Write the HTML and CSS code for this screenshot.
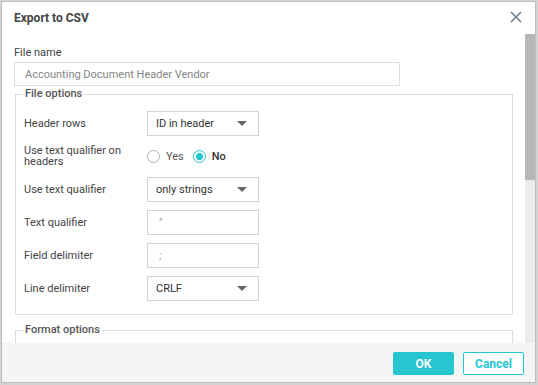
FILE: index.html
```html
<!DOCTYPE html>
<html>
<head>
<meta charset="utf-8">
<link rel="stylesheet" href="styles.css">
</head>
<body>
<div class="dialog">
  <div class="dialog-header">
    <span class="dialog-title">Export to CSV</span>
    <button class="close-btn" aria-label="Close">
      <svg width="12" height="12" viewBox="0 0 12 12"><path d="M1 1 L11 11 M11 1 L1 11" stroke="#6e8190" stroke-width="1.6" fill="none"/></svg>
    </button>
  </div>
  <div class="dialog-body">
    <div class="body-content">
      <label class="field-label">File name</label>
      <input class="text-input file-name" type="text" placeholder="Accounting Document Header Vendor">
      <fieldset class="group">
        <legend>File options</legend>
        <div class="form-grid">
          <div class="row-label">Header rows</div>
          <div class="select"><span>ID in header</span><i class="caret"></i></div>

          <div class="row-label two-line">Use text qualifier on headers</div>
          <div class="radios">
            <span class="radio"></span><span class="radio-text">Yes</span>
            <span class="radio checked"></span><span class="radio-text selected">No</span>
          </div>

          <div class="row-label">Use text qualifier</div>
          <div class="select"><span>only strings</span><i class="caret"></i></div>

          <div class="row-label">Text qualifier</div>
          <div class="text-box">"</div>

          <div class="row-label">Field delimiter</div>
          <div class="text-box">;</div>

          <div class="row-label">Line delimiter</div>
          <div class="select"><span>CRLF</span><i class="caret"></i></div>
        </div>
      </fieldset>
      <fieldset class="group format">
        <legend>Format options</legend>
        <div class="format-space"></div>
      </fieldset>
    </div>
    <div class="scrollbar"><div class="scroll-thumb"></div></div>
  </div>
  <div class="dialog-footer">
    <button class="btn btn-primary">OK</button>
    <button class="btn btn-secondary">Cancel</button>
  </div>
</div>
</body>
</html>
```
FILE: styles.css
```css
html, body {
  margin: 0;
  padding: 0;
}
body {
  background: #d4d4d4;
  font-family: Roboto, "Liberation Sans", Arial, sans-serif;
  font-size: 11px;
  color: #444;
  width: 538px;
  height: 385px;
  overflow: hidden;
}
.dialog {
  box-sizing: border-box;
  width: 535px;
  height: 382px;
  margin: 1px 0 0 1px;
  border: 1px solid #bdbdbd;
  background: #fff;
  display: flex;
  flex-direction: column;
}
.dialog-header {
  height: 32px;
  flex: none;
  display: flex;
  align-items: center;
  justify-content: space-between;
  padding: 0 12px 0 12px;
}
.dialog-title {
  font-size: 12px;
  font-weight: 700;
  color: #444;
  margin-top: -1px;
}
.close-btn {
  border: 0;
  background: none;
  padding: 0;
  width: 12px;
  height: 12px;
  display: block;
  margin-top: -2px;
  margin-right: 1px;
}
.close-btn svg { display: block; }
.dialog-body {
  flex: 1;
  min-height: 0;
  display: flex;
  overflow: hidden;
}
.body-content {
  flex: 1;
  min-width: 0;
  overflow: hidden;
  padding: 12px 12px 0 12px;
}
.scrollbar {
  flex: none;
  width: 10px;
  background: #ececec;
}
.scroll-thumb {
  height: 146px;
  background: #b8b8b8;
}
.field-label {
  display: block;
  line-height: 14px;
  color: #444;
}
.text-input {
  box-sizing: border-box;
  display: block;
  margin-top: 2px;
  width: 386px;
  height: 24px;
  border: 1px solid #dcdcdc;
  padding: 0 10px;
  font-family: inherit;
  font-size: 11px;
  color: #444;
  outline: none;
}
.text-input::placeholder {
  color: #858585;
}
.group {
  margin: 1px 0 0 1px;
  border: 1px solid #dcdcdc;
  padding: 10px 8px 13px 8px;
}
.group legend {
  padding: 0 2px;
  margin-left: -1px;
  line-height: 14px;
  font-weight: 500;
  color: #555;
}
.group.format {
  margin-top: 8px;
  padding-bottom: 0;
}
.format-space {
  height: 80px;
}
.form-grid {
  display: grid;
  grid-template-columns: 123px 112px;
  grid-auto-rows: 25px;
  row-gap: 8px;
  align-items: center;
}
.row-label {
  line-height: 12px;
  color: #444;
}
.row-label.two-line {
  margin-top: -2px;
  line-height: 11px;
}
.select, .text-box {
  box-sizing: border-box;
  height: 25px;
  border: 1px solid #cfd3d8;
  display: flex;
  align-items: center;
  padding: 0 10px 0 8px;
  color: #333;
}
.select {
  justify-content: space-between;
}
.caret {
  width: 0;
  height: 0;
  border-left: 5px solid transparent;
  border-right: 5px solid transparent;
  border-top: 5px solid #666;
  margin-right: 1px;
}
.text-box {
  color: #999;
  padding-left: 11px;
}
.radios {
  display: flex;
  align-items: center;
  margin-top: -1px;
}
.radio {
  box-sizing: border-box;
  width: 13px;
  height: 13px;
  border: 1px solid #b0b0b0;
  border-radius: 50%;
  background: #fff;
  flex: none;
}
.radio.checked {
  border: 1px solid #26c6d0;
  background: radial-gradient(circle, #26c6d0 0 3.3px, #fff 3.8px);
}
.radio-text {
  margin: 0 9px 0 6px;
  color: #555;
}
.radio-text.selected {
  color: #333;
  font-weight: 500;
}
.dialog-footer {
  height: 39px;
  flex: none;
  background: #f5f5f5;
  display: flex;
  justify-content: flex-end;
  align-items: flex-start;
  gap: 9px;
  padding: 9px 11px 0 0;
  box-sizing: border-box;
}
.btn {
  box-sizing: border-box;
  width: 61px;
  height: 23px;
  border-radius: 2px;
  font-family: inherit;
  font-size: 12px;
  font-weight: 700;
  padding: 0;
  cursor: pointer;
}
.btn-primary {
  background: #26c6d0;
  border: 1px solid #26c6d0;
  color: #fff;
}
.btn-secondary {
  background: #fff;
  border: 1px solid #26c6d0;
  color: #26c6d0;
}
```
